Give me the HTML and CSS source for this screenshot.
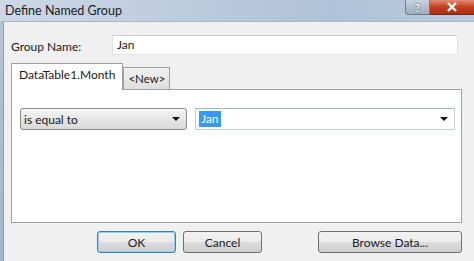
FILE: index.html
```html
<!DOCTYPE html>
<html lang="en">
<head>
  <meta charset="UTF-8">
  <title>Define Named Group</title>
  <link rel="stylesheet" href="styles.css">
</head>
<body>
  <div class="window">
    <!-- Title Bar -->
    <div class="titlebar">
      <span class="title">Define Named Group</span>
      <div class="caption-buttons">
        <div class="caption-help">?</div>
        <div class="caption-close">
          <svg width="12" height="10" viewBox="0 0 12 10"><path d="M2 1 L10 9 M10 1 L2 9" stroke="#ffffff" stroke-width="2.4"/></svg>
        </div>
      </div>
    </div>

    <div class="frame">
      <div class="frame-edge"></div>
      <div class="client">
        <!-- Group Name -->
        <div class="name-row">
          <label class="label">Group Name:</label>
          <div class="textbox">Jan</div>
        </div>

        <!-- Tabs -->
        <div class="tabs">
          <div class="tab active">DataTable1.Month</div>
          <div class="tab">&lt;New&gt;</div>
        </div>
        <div class="tab-panel">
          <div class="condition">
            <div class="combo operator">
              <span>is equal to</span>
              <span class="arrow"></span>
            </div>
            <div class="combo value">
              <span class="selected-text">Jan</span>
              <span class="arrow"></span>
            </div>
          </div>
        </div>

        <!-- Buttons -->
        <div class="buttons">
          <div class="btn default">OK</div>
          <div class="btn">Cancel</div>
          <div class="spacer"></div>
          <div class="btn wide">Browse Data...</div>
        </div>
      </div>
    </div>
  </div>
</body>
</html>
```

FILE: styles.css
```css
* {
  margin: 0;
  padding: 0;
  box-sizing: border-box;
}

body {
  font-family: 'Lato', 'Open Sans', sans-serif;
  font-size: 12px;
  color: #1a1a1a;
  background: #f0f0f0;
  width: 474px;
  height: 261px;
  overflow: hidden;
}

.window {
  display: flex;
  flex-direction: column;
  height: 261px;
}

/* Title Bar */
.titlebar {
  height: 22px;
  display: flex;
  justify-content: space-between;
  align-items: flex-start;
  background: linear-gradient(90deg, #ccd8e6 0%, #bccbde 40%, #b0c2d9 70%, #b9cadf 100%);
  border-bottom: 1px solid #a7b6c8;
}

.title {
  padding-left: 5px;
  line-height: 21px;
  font-size: 12.5px;
  color: #1c1c1c;
}

.caption-buttons {
  display: flex;
  height: 15px;
}

.caption-help,
.caption-close {
  display: flex;
  align-items: center;
  justify-content: center;
}

.caption-help {
  width: 25px;
  border: 1px solid #6f7b8a;
  border-top: none;
  border-radius: 0 0 0 4px;
  background: linear-gradient(#c8d3e0, #9eadc0);
  color: #ffffff;
  font-weight: bold;
  font-size: 11px;
  text-shadow: 0 0 2px #333;
}

.caption-close {
  width: 44px;
  border-bottom: 1px solid #6e2a1c;
  background: linear-gradient(#e08d78, #c73f22 50%, #b02b12);
}

/* Frame */
.frame {
  flex: 1;
  display: flex;
}

.frame-edge {
  width: 4px;
  background: linear-gradient(#b4c3d6, #a3b5cb);
  border-right: 1px solid #8e9cae;
}

.client {
  flex: 1;
  padding: 13px 12px 0 7px;
  display: flex;
  flex-direction: column;
}

.name-row {
  display: flex;
  align-items: center;
  height: 20px;
}

.label {
  width: 101px;
  padding-top: 2px;
}

.textbox {
  width: 346px;
  height: 20px;
  background: #fff;
  border: 1px solid #e0e3e8;
  border-top-color: #c9ccd1;
  padding-left: 4px;
  line-height: 18px;
}

/* Tabs */
.tabs {
  display: flex;
  align-items: flex-end;
  margin-top: 8px;
  height: 26px;
}

.tab {
  height: 22px;
  padding: 0 4px;
  border: 1px solid #a0a0a0;
  border-bottom: none;
  background: linear-gradient(#f2f2f2, #dedede);
  line-height: 21px;
  font-size: 11.5px;
}

.tab.active {
  height: 27px;
  padding: 0 7px;
  background: #fff;
  font-size: 12px;
  line-height: 22px;
  position: relative;
  z-index: 1;
  margin-bottom: -1px;
}

.tab-panel {
  height: 134px;
  background: #fff;
  border: 1px solid #a0a0a0;
  padding: 18px 6px 0 8px;
}

.condition {
  display: flex;
  gap: 8px;
}

.combo {
  height: 22px;
  display: flex;
  align-items: center;
  justify-content: space-between;
  padding: 0 6px 0 3px;
}

.operator {
  width: 167px;
  border: 1px solid #8a8a8a;
  border-radius: 3px;
  background: linear-gradient(#f5f5f5, #e6e6e6 50%, #d9d9d9);
}

.value {
  flex: 1;
  border: 1px solid #c3cedc;
  border-top-color: #a9b3bf;
  background: #fff;
  padding-left: 3px;
}

.selected-text {
  background: #3399ff;
  color: #fff;
  padding: 0 2px;
  line-height: 16px;
}

.arrow {
  width: 0;
  height: 0;
  border-left: 4px solid transparent;
  border-right: 4px solid transparent;
  border-top: 4px solid #111;
}

/* Buttons */
.buttons {
  display: flex;
  gap: 7px;
  margin-top: 8px;
  padding-left: 86px;
}

.btn {
  width: 79px;
  height: 22px;
  border: 1px solid #707070;
  border-radius: 3px;
  background: linear-gradient(#f2f2f2 0%, #ebebeb 50%, #dddddd 51%, #cfcfcf 100%);
  display: flex;
  align-items: center;
  justify-content: center;
}

.btn.default {
  border-color: #3c7fb1;
  box-shadow: inset 0 0 0 1px #8ed1f0;
}

.spacer {
  flex: 1;
}

.btn.wide {
  width: 144px;
}
```
